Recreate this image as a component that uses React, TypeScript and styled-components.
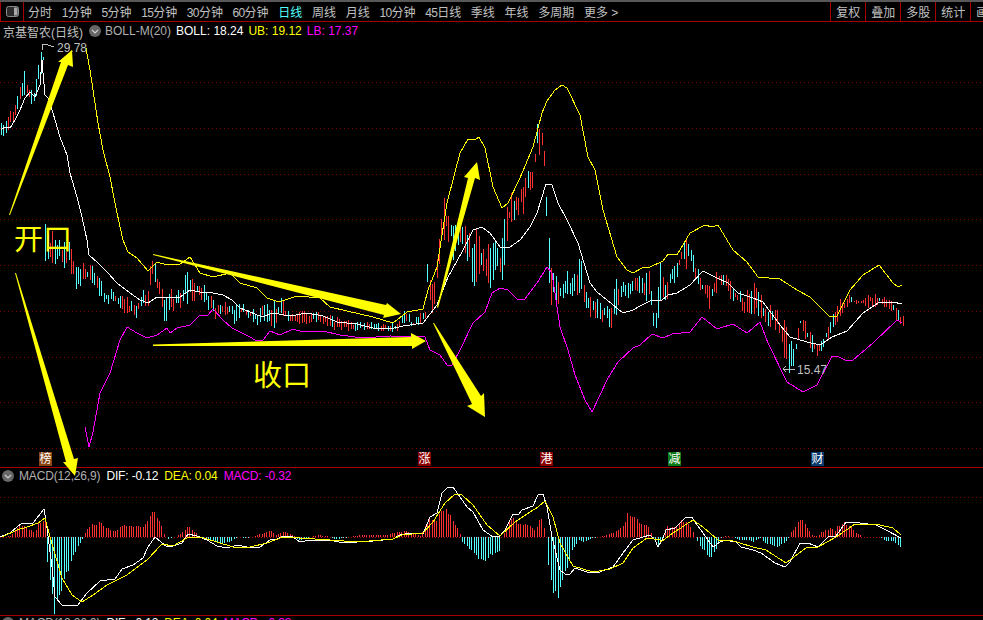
import React from "react";
import styled, { createGlobalStyle } from "styled-components";

const GlobalStyle = createGlobalStyle`
  html, body { margin: 0; padding: 0; background: #000; overflow: hidden; }
  #root { width: 983px; height: 620px; }
`;

const FONT = `"Liberation Sans", "Noto Sans CJK SC", sans-serif`;
const RED_LINE = "#a80000";

const Page = styled.div`
  position: relative;
  width: 983px;
  height: 620px;
  overflow: hidden;
  display: flex;
  flex-direction: column;
  background: #000;
  font: 12px ${FONT};
  color: #c0c0c0;
`;

const Toolbar = styled.div`
  flex: 0 0 22px;
  box-sizing: border-box;
  display: flex;
  align-items: stretch;
  border-top: 2px solid #585858;
  border-bottom: 1px solid ${RED_LINE};
  overflow: hidden;
`;

const LayoutButton = styled.div`
  flex: 0 0 24px;
  box-sizing: border-box;
  border-left: 1px solid ${RED_LINE};
  border-right: 1px solid ${RED_LINE};
  display: flex;
  align-items: center;
  justify-content: center;
`;

const Periods = styled.div`
  display: flex;
  align-items: center;
  gap: 9.7px;
  margin-left: 4px;
  flex: 0 0 auto;
`;

const Period = styled.span<{ $active?: boolean }>`
  white-space: nowrap;
  color: ${(p) => (p.$active ? "#54ffff" : "#c0c0c0")};
`;

const Digits = styled.span`
  letter-spacing: -0.67px;
`;

const Tools = styled.div`
  display: flex;
  align-items: stretch;
  flex: 0 0 auto;
  margin-left: 212px;
`;

const Tool = styled.div`
  flex: 0 0 35px;
  box-sizing: border-box;
  border-left: 1px solid ${RED_LINE};
  padding-left: 5px;
  display: flex;
  align-items: center;
  white-space: nowrap;
  overflow: hidden;
`;

const Pane = styled.div<{ $h: number }>`
  position: relative;
  flex: 0 0 ${(p) => p.$h}px;
  box-sizing: border-box;
  border-bottom: 1px solid ${RED_LINE};
  display: flex;
  flex-direction: column;
`;

const Legend = styled.div<{ $h: number; $pad: number; $gap: number; $tight?: boolean }>`
  flex: 0 0 ${(p) => p.$h}px;
  display: flex;
  align-items: center;
  gap: ${(p) => p.$gap}px;
  padding-left: ${(p) => p.$pad}px;
  white-space: nowrap;
  letter-spacing: ${(p) => (p.$tight ? "-0.15px" : "0")};
`;

const LegendItem = styled.span<{ $c: string }>`
  color: ${(p) => p.$c};
`;

const StockName = styled.span`
  color: #c0c0c0;
  margin-right: 1px;
`;

const Badge = styled.svg`
  flex: 0 0 12px;
  margin-right: -1px;
`;

const Chart = styled.svg`
  display: block;
  flex: 1 1 auto;
  width: 983px;
`;

const Marker = styled.span<{ $left: number; $bg: string }>`
  position: absolute;
  left: ${(p) => p.$left}px;
  bottom: 0;
  margin-bottom: 1px;
  width: 13px;
  height: 14px;
  line-height: 14px;
  text-align: center;
  font-size: 12px;
  color: #fff;
  background: ${(p) => p.$bg};
`;

const Overlay = styled.svg`
  position: absolute;
  left: 0;
  top: 0;
  pointer-events: none;
`;

const Note = styled.div<{ $x: number; $y: number; $s: number }>`
  position: absolute;
  left: ${(p) => p.$x}px;
  top: ${(p) => p.$y}px;
  font-size: ${(p) => p.$s}px;
  line-height: 1;
  color: #ffff00;
  font-family: "Noto Sans CJK SC", sans-serif;
  white-space: nowrap;
`;

/* ---------- data ---------- */

type P = number[];
const rnd = (i: number, k: number) => {
  const v = Math.sin(i * 12.9898 + k * 78.233) * 43758.5453;
  return v - Math.floor(v);
};
const at = (pts: P[], x: number, col: number) => {
  if (x <= pts[0][0]) return pts[0][col];
  for (let i = 1; i < pts.length; i++) {
    if (x <= pts[i][0]) {
      const [a, b] = [pts[i - 1], pts[i]];
      return a[col] + ((b[col] - a[col]) * (x - a[0])) / (b[0] - a[0] || 1);
    }
  }
  return pts[pts.length - 1][col];
};
const line = (pts: P[]) => pts.map((p) => p.join(",")).join(" ");

const ENV: P[] = [
  [0, 123, 135], [5, 118, 137], [13, 103, 128], [20, 82, 105], [24, 71, 100], [30, 87, 105], [35, 83, 110],
  [39, 50, 90], [43, 47, 70], [44.9, 47, 70], [45, 197, 280], [47, 197, 280], [50, 230, 265], [57, 230, 265],
  [60, 240, 270], [70, 240, 270], [75, 262, 290], [90, 262, 285], [98, 265, 295], [103, 290, 305], [115, 288, 307],
  [125, 295, 315], [130, 297, 320], [135, 303, 320], [148, 277, 310], [152, 250, 285], [157, 270, 290],
  [165, 290, 340], [168, 285, 325], [175, 295, 310], [185, 270, 310], [195, 275, 300], [205, 285, 310],
  [215, 300, 320], [225, 300, 315], [235, 305, 325], [240, 300, 320], [255, 310, 325], [265, 295, 325],
  [275, 300, 330], [280, 293, 320], [290, 310, 325], [300, 310, 325], [318, 312, 322], [330, 315, 330],
  [350, 320, 332], [375, 322, 332], [385, 323, 333], [395, 320, 333], [400, 320, 330], [405, 305, 325],
  [412, 320, 328], [420, 312, 325], [425, 310, 325], [427, 240, 312], [432, 280, 320], [437, 250, 290],
  [442, 193, 240], [447, 205, 240], [453, 205, 260], [460, 215, 250], [468, 215, 290], [480, 230, 285],
  [490, 245, 290], [495, 240, 280], [500, 248, 290], [503, 210, 280], [508, 195, 240], [515, 185, 225],
  [522, 170, 220], [527, 165, 200], [533, 165, 195], [537, 120, 160], [540, 117, 160], [543, 135, 150],
  [546, 175, 235], [550, 236, 310], [553, 270, 300], [557, 270, 320], [562, 270, 305], [570, 270, 300],
  [575, 272, 300], [580, 250, 295], [585, 290, 310], [590, 295, 320], [600, 300, 320], [610, 305, 330],
  [615, 275, 320], [622, 280, 300], [632, 280, 300], [640, 272, 300], [650, 270, 310], [654, 315, 345],
  [660, 260, 310], [665, 270, 310], [670, 270, 285], [675, 260, 290], [680, 248, 270], [685, 235, 270],
  [690, 240, 265], [695, 260, 285], [700, 270, 300], [710, 280, 315], [720, 265, 285], [730, 280, 300],
  [745, 290, 320], [755, 280, 320], [765, 300, 325], [775, 305, 330], [785, 320, 365], [790, 340, 375],
  [795, 340, 365], [800, 315, 330], [805, 320, 340], [815, 340, 358], [820, 340, 355], [830, 320, 335],
  [840, 295, 325], [850, 295, 305], [860, 300, 305], [870, 288, 310], [880, 295, 305], [890, 298, 310],
  [895, 300, 320], [902, 315, 330],
];

/* stretches where the reference is mostly rising (red) candles */
const RED_RUNS = [[428, 452], [504, 536], [700, 716], [752, 782], [838, 876]];

const UB: P[] = [
  [86, 48], [90, 70], [93, 90], [98, 123], [103, 150], [110, 177], [115, 203], [120, 227], [123, 240], [128, 252], [137, 258],
  [148, 271], [157, 262], [167, 265], [180, 264], [190, 257], [200, 273], [213, 277], [230, 273], [240, 283],
  [257, 288], [267, 298], [279, 302], [297, 296], [320, 298], [330, 307], [347, 311], [373, 317], [393, 323],
  [407, 312], [423, 309], [428, 290], [437, 267], [447, 203], [460, 153], [468, 139], [475, 140], [479, 137],
  [485, 148], [493, 187], [502, 208], [508, 203], [520, 178], [533, 147], [542, 113], [547, 101], [555, 90],
  [562, 85], [567, 88], [580, 115], [588, 157], [595, 170], [603, 210], [617, 257], [627, 270], [633, 273],
  [642, 268], [650, 267], [663, 261], [668, 254], [677, 255], [690, 233], [705, 225], [712, 227], [718, 225],
  [733, 250], [747, 262], [758, 277], [780, 279], [797, 290], [810, 297], [823, 310], [830, 317], [837, 316],
  [850, 290], [863, 275], [879, 265], [893, 283], [898, 287], [902, 285],
];

const MID: P[] = [
  [1, 130], [5, 127], [10, 128], [15, 120], [20, 110], [25, 98], [30, 92], [35, 97], [40, 85], [42, 60], [43, 73], [45, 95],
  [48, 98], [53, 113], [60, 137], [67, 155], [70, 173], [77, 197], [82, 217], [87, 240], [89, 255], [98, 263],
  [107, 272], [117, 283], [130, 293], [140, 300], [148, 303], [157, 297], [163, 297], [170, 298], [180, 297],
  [190, 290], [200, 292], [213, 293], [223, 295], [232, 300], [240, 308], [250, 312], [262, 317], [273, 313],
  [290, 316], [307, 313], [323, 316], [337, 322], [357, 324], [373, 328], [390, 329], [403, 326], [423, 323],
  [437, 305], [448, 277], [462, 252], [473, 230], [482, 227], [490, 233], [500, 247], [510, 247], [520, 240],
  [530, 227], [537, 213], [546, 184], [552, 185], [558, 203], [567, 220], [578, 243], [590, 283], [597, 292],
  [607, 300], [623, 313], [633, 310], [642, 305], [650, 301], [662, 300], [668, 295], [677, 293], [690, 285],
  [703, 271], [717, 278], [728, 283], [738, 293], [753, 298], [763, 302], [780, 325], [790, 337], [807, 342],
  [820, 345], [832, 337], [847, 331], [863, 313], [878, 303], [893, 302], [902, 304],
];

const LB: P[] = [
  [85, 427], [89, 447], [93, 432], [100, 393], [110, 373], [120, 340], [127, 327], [137, 333], [147, 338], [157, 335],
  [167, 328], [170, 333], [177, 328], [190, 325], [200, 315], [208, 315], [213, 309], [223, 320], [232, 328],
  [240, 332], [250, 337], [255, 340], [263, 340], [270, 331], [280, 335], [293, 329], [303, 332], [323, 331],
  [340, 335], [363, 338], [390, 336], [425, 337], [430, 350], [440, 355], [447, 365], [452, 365], [460, 350],
  [473, 323], [485, 312], [492, 293], [500, 288], [508, 290], [517, 299], [525, 299], [537, 283], [547, 267],
  [552, 273], [557, 307], [560, 327], [568, 350], [575, 375], [585, 400], [592, 412], [600, 395], [608, 378],
  [618, 362], [633, 348], [640, 345], [652, 334], [663, 338], [672, 334], [690, 332], [702, 317], [717, 329],
  [733, 324], [747, 333], [760, 322], [768, 343], [787, 382], [803, 392], [817, 385], [832, 356], [837, 356],
  [847, 361], [853, 360], [873, 343], [897, 320], [902, 323],
];

const HIST: P[] = [
  [5, 0], [10, 1], [20, 12], [25, 10], [30, 7], [35, 4], [38, 14], [42, 15], [45, 18], [46, 0], [47, -24], [50, -40], [54, -74],
  [58, -58], [62, -50], [67, -35], [72, -19], [78, -9], [82, -2], [83, 1], [88, 9], [93, 13], [100, 15], [107, 9],
  [112, 6], [117, 7], [122, 12], [128, 11], [137, 11], [143, 11], [149, 22], [153, 25], [159, 15], [163, 5],
  [166, 0], [168, -2], [172, -1], [180, 3], [185, 7], [188, 10], [195, 5], [198, 1], [203, -1], [217, -5],
  [220, -7], [230, -5], [237, 0], [248, -1], [267, 5], [270, 7], [275, 2], [283, 6], [290, 3], [295, 0], [300, -4],
  [304, -2], [310, 0], [318, 2], [330, 0], [335, -2], [345, -1], [360, 2], [385, 2], [397, 5], [407, 6], [415, 3],
  [420, 1], [425, 12], [430, 20], [436, 15], [443, 30], [450, 22], [457, 10], [461, 0], [462, -5], [467, -10],
  [473, -15], [484, -26], [490, -18], [500, -13], [502, 0], [512, 22], [517, 14], [523, 13], [530, 12], [535, 6],
  [540, 18], [543, 15], [546, 0], [547, -25], [552, -50], [557, -62], [562, -45], [567, -30], [573, -12],
  [578, -3], [583, -5], [593, -1], [600, 0], [607, 2], [617, 6], [623, 12], [627, 22], [637, 18], [642, 12],
  [649, 11], [652, 0], [655, -3], [658, -10], [660, -5], [663, 0], [666, 11], [673, 10], [681, 16], [686, 14],
  [692, 8], [695, 0], [696, -3], [706, -17], [711, -19], [716, -12], [720, -1], [726, 1], [733, 0], [740, -4],
  [746, -3], [753, -5], [760, -1], [765, -6], [775, -10], [786, -5], [789, 0], [791, 5], [800, 18], [806, 12],
  [811, 2], [818, 0], [821, 5], [830, 9], [835, 7], [836, 10], [843, 15], [850, 12], [856, 4], [863, 0], [878, 0],
  [880, -1], [886, -4], [893, -4], [900, -10], [903, -11],
];

const DIF: P[] = [
  [0, 537], [10, 533], [17, 527], [22, 523], [33, 523], [44, 509], [47, 528], [52, 567], [55, 597], [62, 605], [70, 606],
  [78, 605], [87, 593], [100, 581], [115, 579], [122, 569], [133, 565], [143, 558], [148, 547], [155, 537],
  [167, 547], [173, 546], [182, 543], [188, 534], [197, 536], [207, 540], [217, 546], [227, 548], [237, 545],
  [247, 547], [260, 547], [270, 540], [277, 539], [283, 536], [293, 537], [300, 542], [310, 540], [330, 540],
  [343, 543], [357, 542], [373, 541], [393, 539], [400, 535], [410, 533], [423, 534], [430, 517], [437, 513],
  [442, 493], [447, 488], [453, 487], [460, 497], [467, 507], [473, 512], [483, 530], [493, 537], [500, 536],
  [505, 530], [513, 514], [518, 515], [522, 510], [533, 506], [538, 495], [543, 494], [547, 507], [552, 537],
  [560, 570], [565, 574], [570, 574], [575, 568], [587, 572], [597, 573], [613, 567], [623, 553], [633, 540],
  [650, 535], [655, 540], [658, 547], [663, 538], [666, 530], [675, 528], [686, 517], [692, 517], [695, 522],
  [703, 533], [713, 547], [720, 542], [725, 540], [736, 542], [741, 547], [753, 550], [761, 553], [775, 563],
  [785, 567], [790, 562], [800, 543], [808, 543], [818, 547], [828, 537], [836, 536], [846, 522], [860, 523],
  [876, 525], [886, 530], [901, 538],
];

const DEA: P[] = [
  [2, 537], [17, 530], [27, 527], [38, 523], [45, 518], [50, 537], [62, 578], [72, 595], [82, 602], [93, 595], [107, 585],
  [127, 575], [147, 560], [162, 544], [173, 546], [187, 538], [200, 537], [217, 542], [233, 547], [250, 547],
  [267, 543], [283, 537], [300, 538], [330, 540], [357, 542], [393, 539], [402, 535], [423, 533], [433, 522],
  [445, 503], [455, 494], [462, 495], [473, 505], [487, 525], [500, 536], [515, 522], [530, 512], [538, 507],
  [545, 501], [553, 517], [560, 543], [573, 566], [593, 572], [610, 569], [623, 563], [633, 548], [647, 538],
  [660, 540], [661, 542], [673, 533], [693, 520], [703, 527], [718, 540], [730, 540], [753, 547], [766, 550],
  [786, 563], [806, 548], [818, 547], [836, 537], [855, 524], [880, 525], [893, 528], [901, 535],
];

const candles = (() => {
  let red = "";
  let cyan = "";
  for (let i = 0; i < 388; i++) {
    const x = Math.round(1 + i * 2.33);
    const top = at(ENV, x, 1);
    const bottom = at(ENV, x, 2);
    const h = bottom - top;
    const a = Math.round(top + h * rnd(i, 1) * 0.45);
    const b = Math.round(bottom - h * rnd(i, 2) * 0.45);
    const seg = `M${x + 0.5} ${a}V${b}`;
    const inRun = RED_RUNS.some(([s, e]) => x >= s && x <= e);
    if (rnd(i, 3) > (inRun ? 0.15 : 0.55)) red += seg;
    else cyan += seg;
  }
  return { red, cyan };
})();

const histogram = (() => {
  let red = "";
  let cyan = "";
  for (let i = 0; i < 386; i++) {
    const x = Math.round(3 + i * 2.33);
    const v = at(HIST, x, 1) * (0.88 + rnd(i, 5) * 0.2);
    const len = Math.round(v);
    if (len === 0) continue;
    const seg = `M${x + 0.5} 537V${537 - len}`;
    if (len > 0) red += seg;
    else cyan += seg;
  }
  return { red, cyan };
})();

const GRID = [82, 128, 174, 219, 265, 311, 357, 402, 448];

const ARROWS: number[][] = [
  [9, 215, 61, 62, 58, 62, 72, 50, 73, 67, 68, 65, 10, 215],
  [15, 273, 66, 462, 63, 462, 75, 476, 78, 458, 74, 459, 16, 273],
  [153, 254, 386, 305, 387, 303, 401, 314, 383, 318, 384, 315, 153, 255],
  [153, 344.5, 411, 337, 411, 333, 426, 341, 412, 349, 412, 346, 153, 346],
  [437, 307, 468, 178, 464, 177, 477, 162, 480, 180, 475, 178, 438, 308],
  [433, 323, 472, 404, 467, 406, 485, 417, 484, 393, 481, 396, 434, 323],
];

const PERIODS = [
  ["", "分时"], ["1", "分钟"], ["5", "分钟"], ["15", "分钟"], ["30", "分钟"], ["60", "分钟"], ["", "日线"], ["", "周线"],
  ["", "月线"], ["10", "分钟"], ["45", "日线"], ["", "季线"], ["", "年线"], ["", "多周期"], ["", "更多 >"],
];
const TOOLS = ["复权", "叠加", "多股", "统计", "画线"];
const MARKERS = [
  { x: 39, t: "榜", c: "#8a4513" },
  { x: 418, t: "涨", c: "#8a0000" },
  { x: 540, t: "港", c: "#8a0000" },
  { x: 668, t: "减", c: "#0a7a14" },
  { x: 811, t: "财", c: "#0a3a70" },
];

const CollapseBadge = () => (
  <Badge width="12" height="12" viewBox="0 0 12 12">
    <circle cx="6" cy="6" r="6" fill="#666" />
    <path d="M3 5 L6 8 L9 5" fill="none" stroke="#d0d0d0" strokeWidth="1.2" />
  </Badge>
);

const LayoutIcon = () => (
  <svg width="13" height="11" viewBox="0 0 13 11">
    <rect x="0.5" y="0.5" width="12" height="10" rx="2" fill="#2c2c2c" stroke="#8a8a8a" />
    <rect x="8" y="1.5" width="3.5" height="8" fill="#a8a8a8" />
  </svg>
);

const MacdLegend = ({ h }: { h: number }) => (
  <Legend $h={h} $pad={2} $gap={6} $tight>
    <CollapseBadge />
    <LegendItem $c="#b0b0b0">MACD(12,26,9)</LegendItem>
    <LegendItem $c="#ffffff">DIF: -0.12</LegendItem>
    <LegendItem $c="#ffff00">DEA: 0.04</LegendItem>
    <LegendItem $c="#ff00ff">MACD: -0.32</LegendItem>
  </Legend>
);

export default function App() {
  return (
    <Page>
      <GlobalStyle />
      <Toolbar>
        <LayoutButton>
          <LayoutIcon />
        </LayoutButton>
        <Periods>
          {PERIODS.map(([num, label]) => (
            <Period key={num + label} $active={num + label === "日线"}>
              {num && <Digits>{num}</Digits>}
              {label}
            </Period>
          ))}
        </Periods>
        <Tools>
          {TOOLS.map((t) => (
            <Tool key={t}>{t}</Tool>
          ))}
        </Tools>
      </Toolbar>

      <Pane $h={446}>
        <Legend $h={18} $pad={3} $gap={5}>
          <StockName>京基智农(日线)</StockName>
          <CollapseBadge />
          <LegendItem $c="#b0b0b0">BOLL-M(20)</LegendItem>
          <LegendItem $c="#ffffff">BOLL: 18.24</LegendItem>
          <LegendItem $c="#ffff00">UB: 19.12</LegendItem>
          <LegendItem $c="#ff00ff">LB: 17.37</LegendItem>
        </Legend>
        <Chart viewBox="0 40 983 427" height={427} shapeRendering="crispEdges">
          {GRID.map((y) => (
            <line key={y} x1={0} x2={983} y1={y + 0.5} y2={y + 0.5} stroke="#8a0000" strokeDasharray="1 3" shapeRendering="geometricPrecision" />
          ))}
          <path d={candles.red} stroke="#ff3232" fill="none" />
          <path d={candles.cyan} stroke="#54ffff" fill="none" />
          <polyline points={line(UB)} stroke="#ffff00" fill="none" />
          <polyline points={line(MID)} stroke="#ffffff" fill="none" />
          <polyline points={line(LB)} stroke="#ff00ff" fill="none" />
          <path d="M42 44H45M45 44L54 47M42 44V50" stroke="#c0c0c0" fill="none" />
          <path d="M783 369H795M783 369L786 366M783 369L786 372" stroke="#c0c0c0" fill="none" />
          <text x={57} y={52} fill="#c0c0c0" fontSize={12} fontFamily="Liberation Sans">29.78</text>
          <text x={797} y={374} fill="#c0c0c0" fontSize={12} fontFamily="Liberation Sans">15.47</text>
        </Chart>
        {MARKERS.map((m) => (
          <Marker key={m.t} $left={m.x} $bg={m.c}>
            {m.t}
          </Marker>
        ))}
      </Pane>

      <Pane $h={148}>
        <MacdLegend h={16} />
        <Chart viewBox="0 484 983 131" height={131} shapeRendering="crispEdges">
          <line x1={0} x2={983} y1={497.5} y2={497.5} stroke="#8a0000" strokeDasharray="1 3" shapeRendering="geometricPrecision" />
          <line x1={0} x2={903} y1={537.5} y2={537.5} stroke="#b00000" strokeDasharray="1 2" shapeRendering="geometricPrecision" />
          <path d={histogram.red} stroke="#ff3232" fill="none" />
          <path d={histogram.cyan} stroke="#54ffff" fill="none" />
          <polyline points={line(DIF)} stroke="#ffffff" fill="none" />
          <polyline points={line(DEA)} stroke="#ffff00" fill="none" />
        </Chart>
      </Pane>

      <MacdLegend h={14} />

      <Overlay width={983} height={620} viewBox="0 0 983 620">
        {ARROWS.map((a, i) => (
          <polygon key={i} points={a.join(",")} fill="#ffff00" />
        ))}
      </Overlay>
      <Note $x={14} $y={223} $s={29}>开口</Note>
      <Note $x={253} $y={359} $s={29}>收口</Note>
    </Page>
  );
}
